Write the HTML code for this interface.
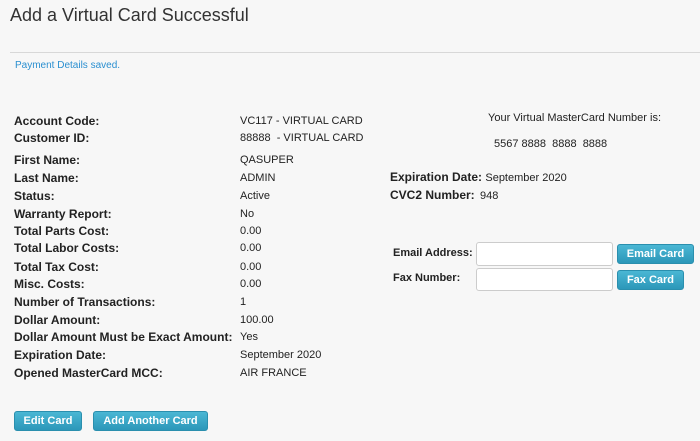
<!DOCTYPE html>
<html><head><style>
body{margin:0;width:700px;height:441px;background:#f7f7f7;font-family:"Liberation Sans",Arial,sans-serif;color:#222;position:relative;overflow:hidden}
.a{position:absolute;white-space:nowrap}
.l{position:absolute;left:14px;font-weight:bold;font-size:12px;line-height:14px}
.v{position:absolute;left:240px;font-size:11px;line-height:14px}
.btn{position:absolute;background:linear-gradient(#4ab7d4,#2c97b9);border:1px solid #2a8fae;border-radius:3px;color:#fff;font-weight:bold;font-size:11px;text-align:center;box-sizing:border-box;line-height:18px}
.in{position:absolute;background:#fff;border:1px solid #ccc;border-radius:3px;box-sizing:border-box}
</style></head><body>
<div class="a" style="left:10px;top:5px;font-size:18px;color:#333">Add a Virtual Card Successful</div>
<div class="a" style="left:10px;top:52px;width:690px;height:1px;background:#d8d8d8"></div>
<div class="a" style="left:15px;top:60px;font-size:10px;color:#2a8fd0">Payment Details saved.</div>

<div class="l" style="top:114px">Account Code:</div><div class="v" style="top:114px">VC117 - VIRTUAL CARD</div>
<div class="l" style="top:131px">Customer ID:</div><div class="v" style="top:131px">88888&nbsp; - VIRTUAL CARD</div>
<div class="l" style="top:153px">First Name:</div><div class="v" style="top:153px">QASUPER</div>
<div class="l" style="top:171px">Last Name:</div><div class="v" style="top:171px">ADMIN</div>
<div class="l" style="top:189px">Status:</div><div class="v" style="top:189px">Active</div>
<div class="l" style="top:207px">Warranty Report:</div><div class="v" style="top:207px">No</div>
<div class="l" style="top:224px">Total Parts Cost:</div><div class="v" style="top:224px">0.00</div>
<div class="l" style="top:241px">Total Labor Costs:</div><div class="v" style="top:241px">0.00</div>
<div class="l" style="top:260px">Total Tax Cost:</div><div class="v" style="top:260px">0.00</div>
<div class="l" style="top:277px">Misc. Costs:</div><div class="v" style="top:277px">0.00</div>
<div class="l" style="top:295px">Number of Transactions:</div><div class="v" style="top:295px">1</div>
<div class="l" style="top:313px">Dollar Amount:</div><div class="v" style="top:313px">100.00</div>
<div class="l" style="top:330px">Dollar Amount Must be Exact Amount:</div><div class="v" style="top:330px">Yes</div>
<div class="l" style="top:348px">Expiration Date:</div><div class="v" style="top:348px">September 2020</div>
<div class="l" style="top:366px">Opened MasterCard MCC:</div><div class="v" style="top:366px">AIR FRANCE</div>

<div class="a" style="left:488px;top:112px;font-size:11px">Your Virtual MasterCard Number is:</div>
<div class="a" style="left:494px;top:138px;font-size:11px">5567 8888&nbsp; 8888&nbsp; 8888</div>
<div class="a" style="left:390px;top:170px;font-size:12px;font-weight:bold">Expiration Date: <span style="font-weight:normal;font-size:11px">September 2020</span></div>
<div class="a" style="left:390px;top:188px;font-size:12px;font-weight:bold">CVC2 Number: <span style="font-weight:normal;font-size:11px;margin-left:2px">948</span></div>

<div class="a" style="left:393px;top:247px;font-size:11px;font-weight:bold">Email Address:</div>
<div class="in" style="left:476px;top:242px;width:137px;height:24px"></div>
<div class="btn" style="left:617px;top:244px;width:77px;height:20px">Email Card</div>
<div class="a" style="left:393px;top:272px;font-size:11px;font-weight:bold">Fax Number:</div>
<div class="in" style="left:476px;top:268px;width:137px;height:23px"></div>
<div class="btn" style="left:617px;top:270px;width:67px;height:20px">Fax Card</div>

<div class="btn" style="left:14px;top:411px;width:68px;height:20px">Edit Card</div>
<div class="btn" style="left:93px;top:411px;width:115px;height:20px">Add Another Card</div>
</body></html>
